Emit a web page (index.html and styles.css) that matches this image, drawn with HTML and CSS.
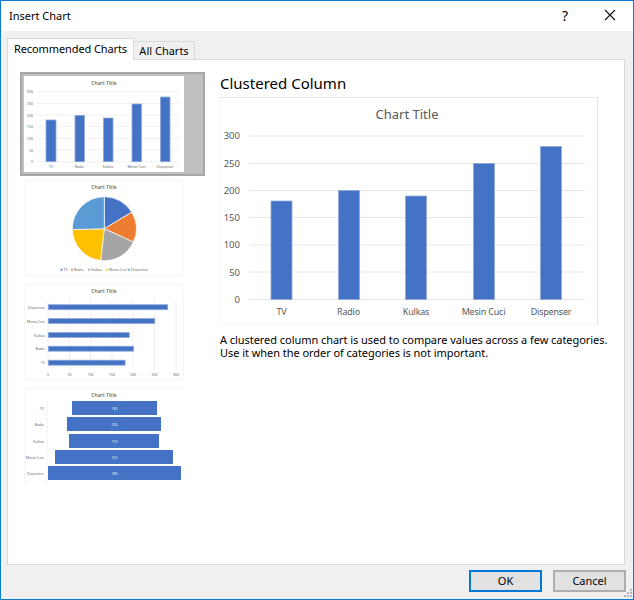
FILE: index.html
```
<!DOCTYPE html>
<html lang="en">
<head>
<meta charset="utf-8">
<title>Insert Chart</title>
<link rel="stylesheet" href="styles.css">
</head>
<body>
<div class="window">
  <header class="titlebar">
    <span class="title">Insert Chart</span>
    <span class="help">?</span>
    <svg class="close" width="12" height="12" viewBox="0 0 12 12"><path d="M1 1L11 11M11 1L1 11" stroke="#111" stroke-width="1.1" fill="none"/></svg>
  </header>
  <div class="tabs">
    <div class="tab active">Recommended Charts</div>
    <div class="tab">All Charts</div>
  </div>
  <main class="panel">
    <div class="thumbs">
      <div class="selected">
        <svg class="thumb" width="160" height="96" viewBox="24 76 160 96">
          <rect x="24" y="76" width="160" height="96" fill="#fff"/>
          <text class="t-title" x="104" y="85" text-anchor="middle">Chart Title</text>
          <g class="grid"><path d="M37 91.7H179M37 103.4H179M37 115H179M37 126.7H179M37 138.4H179M37 150H179M37 161.7H179"/></g>
          <g class="t-small" text-anchor="end"><text x="33" y="93">300</text><text x="33" y="105">250</text><text x="33" y="116.5">200</text><text x="33" y="128">150</text><text x="33" y="140">100</text><text x="33" y="151.5">50</text><text x="33" y="163">0</text></g>
          <g class="bar"><rect x="46" y="120" width="10" height="41.7"/><rect x="75" y="115.4" width="9.5" height="46.3"/><rect x="103.500" y="118" width="9.500" height="43.7"/><rect x="132" y="104" width="9.500" height="57.700"/><rect x="160.500" y="97" width="9.500" height="64.700"/></g>
          <g class="t-small" text-anchor="middle"><text x="51" y="168">TV</text><text x="79.500" y="168">Radio</text><text x="108" y="168">Kulkas</text><text x="136.500" y="168">Mesin Cuci</text><text x="165" y="168">Dispenser</text></g>
        </svg>
      </div>
      <svg class="thumb framed" width="160" height="96" viewBox="24 180 160 96">
        <rect x="24.500" y="180.500" width="159" height="95" class="frame"/>
        <text class="t-title" x="104" y="189" text-anchor="middle">Chart Title</text>
        <g stroke="#fff" stroke-width="0.7">
          <path d="M104.300 228.700V196.700A32 32 0 0 1 131.700 212.200Z" fill="#4472c4"/>
          <path d="M104.300 228.700L131.700 212.200A32 32 0 0 1 133.400 242.100Z" fill="#ed7d31"/>
          <path d="M104.300 228.700L133.400 242.100A32 32 0 0 1 100.600 260.500Z" fill="#a5a5a5"/>
          <path d="M104.300 228.700L100.600 260.500A32 32 0 0 1 72.300 229.600Z" fill="#ffc000"/>
          <path d="M104.300 228.700L72.300 229.600A32 32 0 0 1 104.300 196.700Z" fill="#5b9bd5"/>
        </g>
        <circle cx="61.500" cy="269.700" r="1" fill="#4472c4"/><circle cx="72" cy="269.700" r="1" fill="#ed7d31"/><circle cx="89" cy="269.700" r="1" fill="#a5a5a5"/><circle cx="107" cy="269.700" r="1" fill="#ffc000"/><circle cx="129" cy="269.700" r="1" fill="#5b9bd5"/>
        <g class="t-small"><text x="63.500" y="271.300">TV</text><text x="74" y="271.300">Radio</text><text x="91" y="271.300">Kulkas</text><text x="109" y="271.300">Mesin Cuci</text><text x="131" y="271.300">Dispenser</text></g>
      </svg>
      <svg class="thumb framed" width="160" height="96" viewBox="24 284 160 96">
        <rect x="24.500" y="284.500" width="159" height="95" class="frame"/>
        <text class="t-title" x="104" y="293" text-anchor="middle">Chart Title</text>
        <g class="grid"><path d="M48 299V369M69.500 299V369M90.500 299V369M112 299V369M133 299V369M154.500 299V369M176 299V369"/></g>
        <g class="bar"><rect x="48.300" y="304.700" width="119.400" height="5"/><rect x="48.300" y="318.500" width="106.500" height="5"/><rect x="48.300" y="332.500" width="81" height="5"/><rect x="48.300" y="346.200" width="85.300" height="5"/><rect x="48.300" y="360.200" width="76.800" height="5"/></g>
        <g class="t-small" text-anchor="end"><text x="45" y="308.500">Dispenser</text><text x="45" y="322.500">Mesin Cuci</text><text x="45" y="336.500">Kulkas</text><text x="45" y="350">Radio</text><text x="45" y="364">TV</text></g>
        <g class="t-small" text-anchor="middle"><text x="48" y="376">0</text><text x="69.500" y="376">50</text><text x="90.500" y="376">100</text><text x="112" y="376">150</text><text x="133" y="376">200</text><text x="154.500" y="376">250</text><text x="176" y="376">300</text></g>
      </svg>
      <svg class="thumb" width="160" height="96" viewBox="24 388 160 96">
        <path d="M24.500 484V388.500H184M47.500 400V484" class="frame"/>
        <text class="t-title" x="104" y="396.500" text-anchor="middle">Chart Title</text>
        <g fill="#4472c4"><rect x="72" y="401" width="85" height="14"/><rect x="67" y="417" width="94" height="14"/><rect x="69" y="434" width="90" height="14"/><rect x="55" y="450" width="118" height="14"/><rect x="48" y="466" width="133" height="14"/></g>
        <g class="t-small t-white" text-anchor="middle"><text x="114.500" y="409.500">180</text><text x="114.500" y="425.500">200</text><text x="114.500" y="442.500">190</text><text x="114.500" y="458.500">250</text><text x="114.500" y="474.500">280</text></g>
        <g class="t-small" text-anchor="end"><text x="44" y="409.500">TV</text><text x="44" y="425.500">Radio</text><text x="44" y="442.500">Kulkas</text><text x="44" y="458.500">Mesin Cuci</text><text x="44" y="474.500">Dispenser</text></g>
      </svg>
    </div>
    <section class="detail">
      <h1 class="heading">Clustered Column</h1>
      <svg class="chart" width="379" height="228" viewBox="219 98 379 228">
        <path d="M219 98.500H597.500V326" class="edge"/>
        <path d="M219.500 99V325.500H597" class="edge-faint"/>
        <text class="c-title" x="407" y="120" text-anchor="middle">Chart Title</text>
        <g class="grid big"><path d="M249 137H585M249 164.500H585M249 191.500H585M249 218.500H585M249 246H585M249 273H585M249 300.500H585"/></g>
        <g class="c-label" text-anchor="end"><text x="240" y="139.500">300</text><text x="240" y="167.500">250</text><text x="240" y="194.500">200</text><text x="240" y="221.500">150</text><text x="240" y="248.500">100</text><text x="240" y="276.500">50</text><text x="240" y="303.500">0</text></g>
        <g class="bar"><rect x="271" y="202" width="21" height="98.500"/><rect x="338.500" y="191.500" width="21" height="109"/><rect x="405.500" y="197" width="21" height="103.500"/><rect x="473.500" y="164.500" width="21" height="136"/><rect x="540.500" y="147.500" width="21" height="153"/></g>
        <g class="c-label cat" text-anchor="middle"><text x="281.500" y="315.500">TV</text><text x="348.500" y="315.500">Radio</text><text x="416" y="315.500">Kulkas</text><text x="483.500" y="315.500">Mesin Cuci</text><text x="551" y="315.500">Dispenser</text></g>
      </svg>
      <p class="desc">A clustered column chart is used to compare values across a few categories.<br>Use it when the order of categories is not important.</p>
    </section>
  </main>
  <footer class="footer">
    <button class="btn primary" type="button">OK</button>
    <button class="btn" type="button">Cancel</button>
    <svg class="grip" width="10" height="10" viewBox="0 0 10 10"><path d="M7 0h2v2H7zM4 3h2v2H4zM7 3h2v2H7zM1 6h2v2H1zM4 6h2v2H4zM7 6h2v2H7z" fill="#b8b8b8"/></svg>
  </footer>
</div>
</body>
</html>
```
FILE: styles.css
```
* { box-sizing: border-box; }
html, body { margin: 0; padding: 0; }
body { width: 634px; height: 600px; overflow: hidden; font-family: "Noto Sans", "Open Sans", sans-serif; font-size: 11px; color: #000; }
.window { position: relative; width: 634px; height: 600px; border: 1px solid #0b7ad1; background: #f0f0f0; display: flex; flex-direction: column; }
.titlebar { height: 30px; flex: none; background: #fff; display: flex; align-items: center; padding: 0 0 2px 8px; }
.title { flex: 1; }
.help { width: 16px; margin-right: 31px; font-size: 14px; text-align: center; }
.close { margin-right: 17px; }
.tabs { flex: none; display: flex; align-items: flex-end; margin: 7px 0 -1px 6px; height: 22px; position: relative; z-index: 1; }
.tab { height: 19px; width: 61px; text-align: center; line-height: 18px; background: #f0f0f0; border: 1px solid #d9d9d9; border-left: 0; }
.tab.active { height: 22px; width: 127px; background: #fff; border: 1px solid #d9d9d9; border-bottom: 0; line-height: 19px; letter-spacing: -0.1px; }
.panel { flex: 1; min-height: 0; margin: 0 8px 0 6px; background: #fff; border: 1px solid #d9d9d9; padding: 12px 0 0 12px; display: flex; gap: 14px; }
.thumbs { width: 185px; flex: none; display: flex; flex-direction: column; align-items: flex-start; }
.thumb { display: block; margin-left: 4px; }
.selected { width: 185px; height: 104px; background: #c0c0c0; border: 2px solid #a6a6a6; padding: 2px; margin-bottom: 4px; }
.selected .thumb { margin-left: 0; }
.framed { margin-bottom: 8px; }
.frame { fill: none; stroke: #f5f5f5; stroke-width: 1; }
.t-title { font-size: 5px; fill: #707070; font-weight: 600; }
.t-small { font-size: 3.6px; fill: #6a6a6a; }
.t-white { fill: #dfe6f5; }
.grid path { stroke: #f0f0f0; stroke-width: 1; fill: none; }
.grid.big path { stroke: #e6e6e6; }
.bar rect { fill: #4472c4; stroke: #8faadc; stroke-width: 0.8; }
.detail { flex: 1; min-width: 0; }
.heading { margin: 0; height: 25px; font-size: 15px; font-weight: 400; line-height: 22px; padding-left: 1px; }
.chart { display: block; }
.edge { fill: none; stroke: #e4e4e4; stroke-width: 1; }
.edge-faint { fill: none; stroke: #f7f7f7; stroke-width: 1; }
.c-title { font-size: 13px; fill: #595959; }
.c-label { font-size: 9.500px; fill: #595959; }
.c-label.cat { font-size: 9px; letter-spacing: -0.2px; }
.desc { margin: 8px 0 0 1px; font-size: 11px; line-height: 13px; letter-spacing: -0.05px; white-space: nowrap; }
.footer { flex: none; height: 34px; padding: 5px 7px 0 0; display: flex; justify-content: flex-end; align-items: flex-start; gap: 11px; }
.btn { width: 73px; height: 22px; padding: 0; background: #e1e1e1; border: 2px solid #adadad; font: inherit; color: #000; line-height: 18px; }
.btn.primary { border-color: #0078d7; }
.grip { position: absolute; right: 0; bottom: 0; }
```
